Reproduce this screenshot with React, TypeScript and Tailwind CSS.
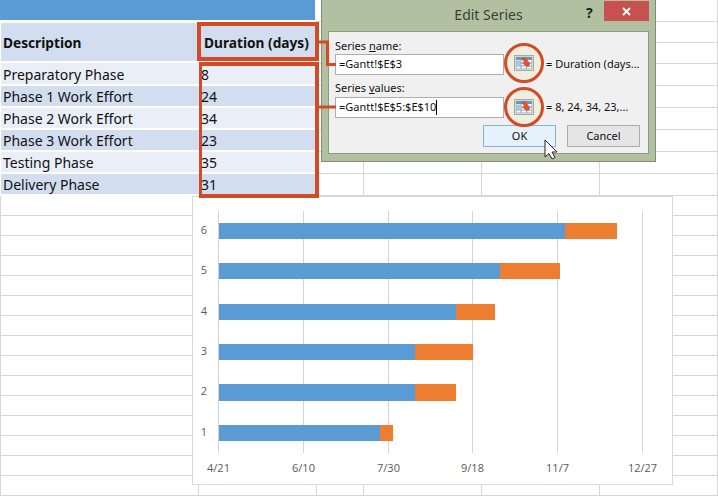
const rows = [
  ["Preparatory Phase", "8"],
  ["Phase 1 Work Effort", "24"],
  ["Phase 2 Work Effort", "34"],
  ["Phase 3 Work Effort", "23"],
  ["Testing Phase", "35"],
  ["Delivery Phase", "31"],
];

const bars = [
  { label: "6", y: 223, h: 16, blue: 565, end: 617 },
  { label: "5", y: 263, h: 16, blue: 500, end: 560 },
  { label: "4", y: 304, h: 16, blue: 456, end: 495 },
  { label: "3", y: 344, h: 16, blue: 415, end: 473 },
  { label: "2", y: 384, h: 17, blue: 415, end: 456 },
  { label: "1", y: 425, h: 16, blue: 380, end: 393 },
];

const ticks = [
  { x: 218.5, t: "4/21" },
  { x: 303.5, t: "6/10" },
  { x: 388.5, t: "7/30" },
  { x: 472.5, t: "9/18" },
  { x: 557.5, t: "11/7" },
  { x: 642.5, t: "12/27" },
];

function RefIcon() {
  return (
    <svg width="20" height="16" viewBox="0 0 20 16">
      <rect x="0.5" y="0.5" width="19" height="15" fill="#ffffff" stroke="#a8ac9c" />
      <rect x="2" y="2" width="16" height="3" fill="#6f95bf" />
      <rect x="2" y="2" width="16" height="12" fill="none" stroke="#7f96ad" strokeWidth="0.8" />
      <path d="M2 8H18M2 11H18M7 5V14M12.500 5V14" stroke="#86a0ba" strokeWidth="1" />
      <rect x="2.500" y="5.500" width="4" height="2.500" fill="#a9c2dd" />
      <rect x="2.500" y="8.500" width="4" height="2.500" fill="#a9c2dd" />
      <path d="M7.500 3.500L11 2.500L16 8.500L14.500 11.500L11 10.500L8.500 8L10.500 7Z" fill="#e0552f" stroke="#c6452a" strokeWidth="0.5" />
    </svg>
  );
}

export default function App() {
  const rightHeights = [22, 21, 21, 22, 22, 22, 22, 22, 22];
  return (
    <div className="relative w-[718px] h-[496px] overflow-hidden bg-white font-['Noto_Sans',sans-serif] text-[#111]">
      {/* Sheet */}
      <div className="flex h-[196px]">
        <div className="w-[316px] shrink-0">
          <div className="h-5 w-[315px] bg-[#5b9bd5]" />
          <div className="ml-px mt-[3px] w-[314px] flex flex-col gap-[2px]">
            <div className="flex h-[38px] items-center bg-[#d2deef] text-[13.7px] font-bold">
              <div className="w-[196px] pl-[2px] pt-[2px]">Description</div>
              <div className="pl-[7px] pt-[2px] whitespace-nowrap">Duration (days)</div>
            </div>
            {rows.map((r, i) => (
              <div key={r[0]} className={`flex items-center text-[14px] leading-none pt-[2px] ${i === 0 ? "h-[21px]" : "h-5"} ${i % 2 === 0 ? "bg-[#eaeff7]" : "bg-[#d2deef]"}`}>
                <div className="w-[200px] pl-[2px]">{r[0]}</div>
                <div>{r[1]}</div>
              </div>
            ))}
          </div>
        </div>
        <div className="flex-1 flex flex-col">
          {rightHeights.map((h, i) => (
            <div key={i} style={{ height: h }} className="flex shrink-0 border-b border-r border-[#d6d6d6] box-border">
              {[48, 118, 118, 118].map((w, j) => (
                <div key={j} style={{ width: w }} className="h-full border-r border-[#d6d6d6] box-border" />
              ))}
            </div>
          ))}
        </div>
      </div>
      <div className="w-[718px]">
        {Array.from({ length: 15 }).map((_, i) => (
          <div key={i} className="flex h-5 border-b border-l border-[#d6d6d6] box-border">
            {[198, 118, 47, 118, 118, 118].map((w, j) => (
              <div key={j} style={{ width: w }} className="h-full border-r border-[#d6d6d6] box-border" />
            ))}
          </div>
        ))}
      </div>

      {/* Chart */}
      <div className="absolute left-[192px] top-[196px] w-[481px] h-[289px] bg-white border border-[#d9d9d9] box-border">
        <svg width="481" height="289" viewBox="192 196 481 289" className="absolute -left-px -top-px font-['Open_Sans',sans-serif]">
          {ticks.map((t) => (
            <g key={t.t}>
              <line x1={t.x} x2={t.x} y1="211" y2="453" stroke="#d4d4d4" strokeWidth="1" />
              <text x={t.x} y="472" textAnchor="middle" fontSize="11" fill="#595959">{t.t}</text>
            </g>
          ))}
          {bars.map((b) => (
            <g key={b.label}>
              <rect x="219" y={b.y} width={b.blue - 219} height={b.h} fill="#5b9bd5" />
              <rect x={b.blue} y={b.y} width={b.end - b.blue} height={b.h} fill="#ed7d31" />
              <text x="204" y={b.y + 11} textAnchor="middle" fontSize="11" fill="#595959">{b.label}</text>
            </g>
          ))}
        </svg>
      </div>

      {/* Red annotation boxes */}
      <div className="absolute left-[197px] top-[22px] w-[122px] h-[39px] border-4 border-[#d34a24]" />
      <div className="absolute left-[199px] top-[62px] w-[120px] h-[136px] border-4 border-l-[3px] border-[#d34a24]" />

      {/* Dialog */}
      <div className="absolute left-[321px] top-0 w-[335px] h-[162px] bg-[#b2c0a2] border border-[#7f8d70] border-t-0 box-border flex flex-col">
        <div className="relative h-[31px] flex items-center justify-center text-[14px] text-[#3a3f34] shrink-0 pb-[3px]">
          Edit Series
          <span className="absolute left-[264px] top-[2px] text-[14px] font-bold text-[#222]">?</span>
          <div className="absolute left-[282px] top-px w-[45px] h-5 bg-[#c75050] flex items-center justify-center">
            <svg width="9" height="9" viewBox="0 0 9 9"><path d="M1 1L8 8M8 1L1 8" stroke="#fff" strokeWidth="1.8" /></svg>
          </div>
        </div>
        <div className="ml-[6px] w-[321px] h-[123px] bg-[#f0f0f0] border border-[#8c9a7e] box-border pl-[6px] pt-[7px] text-[11px] text-[#111]">
          <div className="leading-[14px] h-[14px]">Series <span className="underline">n</span>ame:</div>
          <div className="flex items-center mt-px h-[21px]">
            <div className="w-[169px] h-[21px] bg-white border border-[#abadb3] box-border pl-[3px] text-[11px] flex items-center">=Gantt!$E$3</div>
            <div className="ml-[42px] whitespace-nowrap">= Duration (days...</div>
          </div>
          <div className="leading-[14px] h-[14px] mt-[6px]">Series <span className="underline">v</span>alues:</div>
          <div className="flex items-center mt-[2px] h-[21px]">
            <div className="w-[169px] h-[21px] bg-white border border-[#abadb3] box-border pl-[3px] text-[11px] flex items-center">
              =Gantt!$E$5:$E$10<span className="w-px h-[15px] bg-black" />
            </div>
            <div className="ml-[42px] whitespace-nowrap">= 8, 24, 34, 23,...</div>
          </div>
          <div className="flex mt-[7px] pl-[148px] gap-[11px]">
            <div className="w-[73px] h-[22px] bg-[#e5f1fb] border border-[#7eb4ea] box-border flex items-center justify-center">OK</div>
            <div className="w-[73px] h-[22px] bg-[#e5e5e5] border border-[#acacac] box-border flex items-center justify-center">Cancel</div>
          </div>
        </div>
      </div>

      {/* Connectors */}
      <svg className="absolute left-0 top-0" width="718" height="496" fill="none">
        <path d="M318 42H327.500V64.500H336" stroke="#d34a24" strokeWidth="3" />
        <path d="M318 107H336" stroke="#d34a24" strokeWidth="3" />
        <path d="M545 140V157L549 153.500L552 159L555 157.500L552 152H557Z" fill="#fff" stroke="#222" strokeWidth="1" />
      </svg>

      {/* Circled reference buttons */}
      <div className="absolute left-[504px] top-[43px] w-10 h-10 rounded-full border-[3px] border-[#d34a24] bg-[#efefe0] flex items-center justify-center">
        <RefIcon />
      </div>
      <div className="absolute left-[504px] top-[87px] w-10 h-10 rounded-full border-[3px] border-[#d34a24] bg-[#efefe0] flex items-center justify-center">
        <RefIcon />
      </div>
    </div>
  );
}
